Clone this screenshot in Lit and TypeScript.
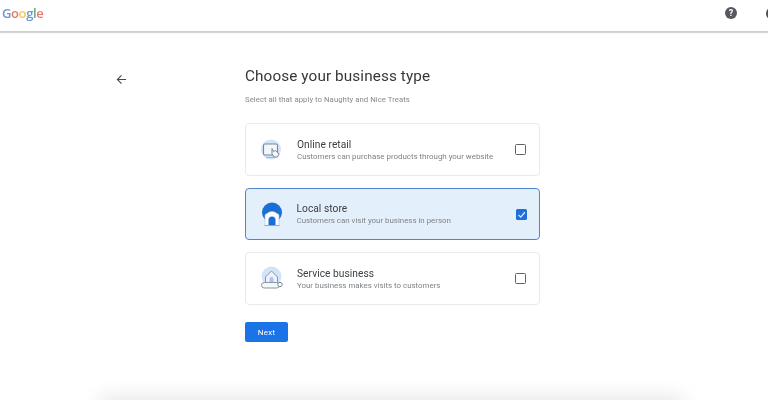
import { LitElement, html, css, svg } from "lit";
import { customElement } from "lit/decorators.js";

const retailIcon = svg`<svg width="24" height="24" viewBox="0 0 24 24">
  <circle cx="11" cy="11.500" r="10" fill="#d3e3fa"/>
  <rect x="3.500" y="6" width="14" height="11" rx="1.500" fill="#f3f6fb" stroke="#7d8794" stroke-width="1.100"/>
  <path d="M12 10.500l1.500 3 2-1 3.500 3.500-1.500 3h-3.500l-2-3z" fill="#f3f6fb" stroke="#7d8794" stroke-width="1"/>
  <path d="M6 19.500h8" stroke="#a9b3bf" stroke-width="1"/>
</svg>`;

const storeIcon = svg`<svg width="24" height="26" viewBox="0 0 24 26">
  <circle cx="12" cy="11.500" r="10" fill="#1a6fd4"/>
  <path d="M5 24.500V14.500Q5 13 7 12.500Q9 10.500 12 10.500Q15 10.500 17 12.500Q19 13 19 14.500V24.500z" fill="#fbfcfe" stroke="#b9c3cf" stroke-width="0.600"/>
  <path d="M8.500 24v-5a3.500 3.500 0 0 1 7 0v5z" fill="#1a6fd4"/>
  <path d="M4.500 24.500h15" stroke="#98a3af" stroke-width="1"/>
</svg>`;

const serviceIcon = svg`<svg width="24" height="25" viewBox="0 0 24 25">
  <circle cx="11.500" cy="10.500" r="10" fill="#d3e3fa"/>
  <path d="M5.500 11L11.500 5l6 6v6h-12z" fill="#eef3fb" stroke="#8b96a3" stroke-width="1"/>
  <path d="M9.500 17v-4a2 2 0 0 1 4 0v4z" fill="#a9c4ee"/>
  <rect x="1.500" y="16.500" width="18" height="5.500" rx="2.700" fill="#f4f7fb" stroke="#8b96a3" stroke-width="1"/>
  <circle cx="20" cy="18.500" r="2.200" fill="#fff" stroke="#7d8794" stroke-width="1"/>
</svg>`;

interface Opt { icon: unknown; title: string; desc: string; on?: boolean }

const options: Opt[] = [
  { icon: retailIcon, title: "Online retail", desc: "Customers can purchase products through your website" },
  { icon: storeIcon, title: "Local store", desc: "Customers can visit your business in person", on: true },
  { icon: serviceIcon, title: "Service business", desc: "Your business makes visits to customers" },
];

@customElement("app-root")
export class AppRoot extends LitElement {
  static styles = css`
    :host {
      display: block;
      position: relative;
      width: 768px;
      height: 400px;
      overflow: hidden;
      background: #fff;
      font-family: Roboto, "Noto Sans", sans-serif;
      color: #3c4043;
    }
    .soft { filter: blur(0.35px); height: 100%; display: flex; flex-direction: column; }
    header {
      flex: none;
      height: 32px;
      box-sizing: border-box;
      display: flex;
      align-items: center;
      justify-content: space-between;
      padding-left: 2px;
      border-bottom: 1px solid #cfcfcf;
      box-shadow: 0 1px 1px #d6d6d6;
    }
    .logo { font-family: "Open Sans", Roboto, sans-serif; font-size: 13px; font-weight: 600; letter-spacing: -0.4px; line-height: 1; padding-bottom: 5px; }
    .b { color: #6f94d8; } .r { color: #e2776c; } .y { color: #f0c85c; } .g { color: #68ad7c; }
    .tools { display: flex; align-items: center; gap: 29px; margin-right: -10px; padding-bottom: 5px; }
    .help {
      width: 12px; height: 12px; border-radius: 50%;
      background: #55595e; color: #fff;
      font-size: 9px; font-weight: 700; line-height: 12px; text-align: center;
    }
    .avatar { width: 12px; height: 13px; border-radius: 50%; background: #4a5058; }
    main {
      flex: 1;
      display: grid;
      grid-template-columns: 245px 295px;
      align-content: start;
    }
    .back { padding: 42px 0 0 116px; }
    .back svg { display: block; }
    .content { padding-top: 34px; min-width: 0; }
    h1 {
      margin: 0;
      font-size: 15.300px;
      font-weight: 400;
      line-height: 20px;
      color: #35383b;
      white-space: nowrap;
      letter-spacing: 0.1px;
    }
    .sub {
      margin: 9px 0 0;
      font-size: 7.800px;
      line-height: 10px;
      color: #85898e;
      white-space: nowrap;
      letter-spacing: 0.03px;
    }
    .list { display: flex; flex-direction: column; gap: 12px; margin-top: 18px; }
    .card {
      height: 53px;
      box-sizing: border-box;
      display: flex;
      align-items: center;
      padding: 0 13px 0 14px;
      border: 1px solid #e8eaed;
      border-radius: 4px;
      background: #fff;
    }
    .card.on {
      background: #e4effc;
      border: 1.500px solid #5087cc;
      height: 52px;
      padding-left: 13.500px;
      padding-right: 12.500px;
    }
    .ico { width: 24px; flex: none; display: flex; justify-content: center; margin-right: 13px; }
    .txt { flex: 1; min-width: 0; }
    .title { font-size: 10.200px; line-height: 13px; color: #3c4043; white-space: nowrap; letter-spacing: 0.05px; }
    .desc { font-size: 7.900px; line-height: 11px; color: #7f8387; white-space: nowrap; }
    .box {
      flex: none;
      width: 9px; height: 9px;
      border: 1.500px solid #5f6368;
      border-radius: 1.500px;
      box-sizing: content-box;
    }
    .box.on {
      width: 11px; height: 11px; border: 0;
      padding: 0;
      background: #1f6fdc;
      display: flex; align-items: center; justify-content: center;
    }
    .next {
      display: block;
      margin-top: 17px;
      width: 43px; height: 20px;
      border: 0; border-radius: 2px;
      background: #1b73e8; color: #fff;
      font-family: inherit; font-size: 8px; font-weight: 400; letter-spacing: 0.3px;
      padding: 0;
    }
    .edge {
      position: absolute;
      left: 100px; right: 85px; bottom: -10px;
      height: 10px;
      box-shadow: 0 0 20px rgba(0,0,0,0.18);
    }
  `;

  render() {
    return html`
      <div class="soft">
        <header>
          <div class="logo"><span class="b">G</span><span class="r">o</span><span class="y">o</span><span class="b">g</span><span class="g">l</span><span class="r">e</span></div>
          <div class="tools"><div class="help">?</div><div class="avatar"></div></div>
        </header>
        <main>
          <div class="back">
            <svg width="11" height="11" viewBox="0 0 24 24" fill="none" stroke="#45494e" stroke-width="2.400">
              <path d="M22 12H4M12 3l-9 9 9 9"/>
            </svg>
          </div>
          <div class="content">
            <h1>Choose your business type</h1>
            <p class="sub">Select all that apply to Naughty and Nice Treats</p>
            <div class="list">
              ${options.map(o => html`
                <div class="card ${o.on ? "on" : ""}">
                  <div class="ico">${o.icon}</div>
                  <div class="txt">
                    <div class="title">${o.title}</div>
                    <div class="desc">${o.desc}</div>
                  </div>
                  ${o.on
                    ? html`<div class="box on"><svg width="9" height="9" viewBox="0 0 12 12" fill="none" stroke="#dce9fb" stroke-width="1.800"><path d="M2 6.500l3 3 5.500-6.500"/></svg></div>`
                    : html`<div class="box"></div>`}
                </div>`)}
            </div>
            <button class="next">Next</button>
          </div>
        </main>
      </div>
      <div class="edge"></div>
    `;
  }
}
